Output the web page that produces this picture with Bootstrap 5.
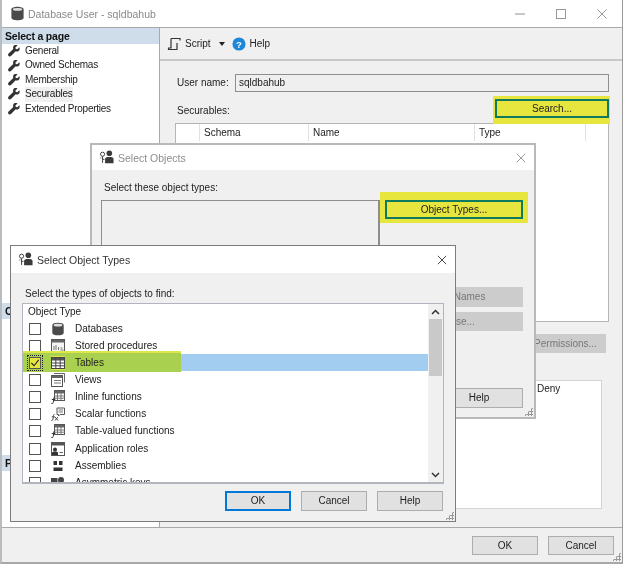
<!DOCTYPE html>
<html lang="en">
<head>
<meta charset="utf-8">
<title>Database User - sqldbahub</title>
<link href="https://cdn.jsdelivr.net/npm/bootstrap@5.3.0/dist/css/bootstrap.min.css" rel="stylesheet">
<style>
html,body{margin:0;padding:0;background:#fff;overflow:hidden}
body{width:624px;height:565px;position:relative;font-family:"Liberation Sans",Arial,sans-serif;font-size:10px;line-height:14px;color:#222;filter:blur(.4px);white-space:nowrap}
.win-main{width:623px;height:564px;border-left:2px solid #b9bcc0;border-right:1px solid #9a9a9a;border-bottom:2px solid #a8a8a8;background:#f0f0f0}
.win-title{height:28px;background:#fff;border-bottom:1px solid #a9a9a9;padding-left:8px;color:#8a8a8a;font-size:10.5px}
.win-title svg{width:15px;height:15px}
.win-title svg.me-2{margin-right:3px!important}
.win-ctl{width:94px;margin-right:14px}
.win-ctl svg{width:12px;height:12px}
.main-body{height:499px}
.side-pane{width:158px;background:#fff;border-right:1px solid #a9a9a9}
.side-head{height:16px;background:#cfdcea;font-weight:700;font-size:10.5px;color:#111;padding-left:3px;line-height:16px;letter-spacing:-.2px}
.side-gap-a{height:187px}
.side-gap-b{height:136px}
.side-item{height:14.4px;padding-left:6px;gap:5px;line-height:14.4px;letter-spacing:-.25px}
.side-item svg{width:12px;height:12px}
.side-item.sel span{background:#f0f0f0}
.tool-strip{height:33px;border-bottom:2px solid #c9c9c9;padding-left:7px;gap:4px}
.tool-strip svg{width:14px;height:14px}
.tool-strip .tool-help{width:14px;height:14px;margin-left:3px}
.caret-a{width:0;height:0;border-left:3.5px solid transparent;border-right:3.5px solid transparent;border-top:4px solid #222;margin-left:4px}
.form-pane{padding:13px 13px 0 15px}
.name-row{height:18px;padding-left:2px}
.name-val{width:374px;height:18px;background:#efefef;border:1px solid #8e8e8e;padding-left:3px;line-height:16px}
.sec-row{height:32px;padding-left:2px}
.sec-lab{padding-top:12px}
.hl-search{background:#e6e63f;padding:3px 1px 6px 2px;height:28px;margin-top:4px;margin-right:-1px}
.btn-win{--bs-btn-padding-y:0;--bs-btn-padding-x:0;--bs-btn-font-size:10px;--bs-btn-line-height:1;--bs-btn-border-radius:0;--bs-btn-bg:#e1e1e1;--bs-btn-border-color:#adadad;--bs-btn-color:#222;height:19px;width:66px;font-family:inherit;white-space:nowrap}
.btn-hl{background:#e6e63f;border:2px solid #0f7a5e;color:#222}
.btn-search{width:114px;display:block}
.grid-box{height:199px;width:434px;background:#fff;border:1px solid #b5b5b5;margin-top:-1px}
.grid-head{height:17px;line-height:17px}
.gh-a{width:24px;border-right:1px solid #e2e2e2}
.gh-b{width:109px;padding-left:4px;border-right:1px solid #e2e2e2}
.gh-c{width:166px;padding-left:4px;border-right:1px solid #e2e2e2}
.gh-d{width:111px;padding-left:4px;border-right:1px solid #e2e2e2}
.perm-wrap{padding-top:12px;padding-right:3px}
.btn-perm{width:122px;background:#ccc;border-color:#ccc;color:#777}
.deny-box{height:129px;width:427px;background:#fff;border:1px solid #d4d4d4;margin-top:27px;padding:1px 0 0 361px}
.win-foot{height:35px;border-top:1px solid #a9a9a9;padding-right:8px;gap:10px;padding-top:8px}
.grip{position:absolute;right:1px;bottom:1px;width:9px;height:9px;background-image:radial-gradient(circle,#999 1px,transparent 1.2px);background-size:3px 3px;clip-path:polygon(100% 0,100% 100%,0 100%)}
.dlg{position:absolute;background:#f0f0f0;border:1px solid #8c8c8c}
.dlg-objs{left:90px;top:143px;width:446px;height:276px;border-color:#b9b9b9;border-width:2px}
.dlg-types{left:10px;top:245px;width:446px;height:277px;border-color:#7c7c7c}
.dlg-title{background:#fff;padding-left:7px;gap:4px;font-size:10.5px}
.dlg-objs .dlg-title{height:25px;color:#8d8d8d}
.dlg-types .dlg-title{height:27px;color:#333}
.dlg-title svg{width:15px;height:15px}
.dlg-title svg.dlg-x{width:10px;height:10px;margin-right:8px}
.dlg-objs .lab-a{padding:11px 0 0 12px;height:29px}
.objs-row{padding-left:9px;height:220px}
.objs-box{width:279px;height:220px;border:1px solid #8e8e8e;border-right-width:2px;background:#f0f0f0;margin-top:1px}
.objs-btns{width:148px;position:relative}
.hl-types{background:#e6e63f;height:31px;margin-top:-7px;padding:8px 0 0 5px}
.btn-types{width:138px}
.btn-off{display:block;width:138px;height:20px;margin-left:5px;background:#ccc;border-color:#ccc;color:#777}
.b1{margin-top:64px}
.b2{margin-top:5px;height:19px}
.b3{margin:57px 0 0 55px;width:88px;background:#e1e1e1;border-color:#adadad;color:#222}
.dlg-types .lab-a{padding:14px 0 0 14px;height:30px}
.list-frame{margin-left:11px;width:422px;height:181px;background:#fff;border:1px solid #b0b5be;border-bottom-width:2px}
.list-main{width:405px;overflow:hidden;height:178px}
.list-cap{height:15px;line-height:15px;padding-left:5px;margin-bottom:1px}
.type-row{height:17.15px;flex:none;position:relative}
.type-row .ck{width:12px;height:12px;border:1px solid #555;background:#fff;margin-left:6px;flex:none;display:flex;align-items:center;justify-content:center}
.type-row svg.ti{width:14px;height:14px;margin:0 10px 0 10px;flex:none}
.type-row.pick{background:#a3cdf0}
.pick-mark{position:absolute;left:-5px;top:-3px;width:163px;height:21px;background:#a9d04f;border-top:2px solid #dfe64a}
.type-row.pick>.ck,.type-row.pick>svg.ti,.type-row.pick>span{position:relative;z-index:1}
.type-row.pick>.ck{background:#e6e63f;outline:1px dotted #222;outline-offset:1px}
.type-row.pick>svg.ti{background:#dfe64a}
.scroll-bar{width:15px;background:#f0f0f0}
.scroll-up,.scroll-dn{height:15px}
.scroll-up svg,.scroll-dn svg{width:9px;height:6px}
.scroll-thumb{height:57px;background:#c9c9c9;margin:0 1px}
.dlg-foot{padding:7px 12px 0 0;gap:10px}
.btn-pri{border:2px solid #0078d7}
.btn-foot{height:20px}
</style>
</head>
<body>
<svg width="0" height="0" class="d-block position-absolute">
<defs>
<symbol id="i-db" viewBox="0 0 16 16"><path fill="#4a4a4a" d="M1.500 3.500C1.500 1.800 4.400.8 8 .8s6.500 1 6.500 2.700v9c0 1.700-2.900 2.700-6.500 2.700s-6.500-1-6.500-2.700z"/><ellipse cx="8" cy="3.600" rx="5" ry="1.500" fill="#ddd"/></symbol>
<symbol id="i-wr" viewBox="0 0 12 12"><path fill="#333" d="M11.500 2.200 9.300 4.300 7.800 3.900 7.400 2.500 9.500.4C7.900-.2 6-.1 5.300 1.400c-.4 1-.3 1.800 0 2.500L.6 8.500c-.7.700-.7 1.800 0 2.500s1.700.8 2.400.1l4.700-4.800c.7.300 1.600.4 2.500 0 1.400-.700 1.800-2.600 1.300-4.100z"/></symbol>
<symbol id="i-ppl" viewBox="0 0 16 16"><circle cx="11" cy="3.500" r="3" fill="#3a3a3a"/><path fill="#3a3a3a" d="M6.500 14V9.500c0-1.500 1.500-2 4.500-2s4.500.5 4.500 2V14z"/><circle cx="3.800" cy="4.500" r="2.200" fill="#fff" stroke="#3a3a3a"/><path fill="none" stroke="#3a3a3a" d="M3.800 6.800v7M3.800 10h2M1.500 8.500h1"/></symbol>
<symbol id="i-sp" viewBox="0 0 14 14"><rect x=".5" y=".5" width="13" height="13" fill="#f4f4f4" stroke="#555"/><path d="M1 1h12v2.500H1z" fill="#666"/><path d="M3 11V7M5 11V6M7.500 11V8M9.500 11h3M9.500 9h2" stroke="#777" fill="none"/></symbol>
<symbol id="i-tb" viewBox="0 0 14 14"><rect x=".5" y="1.500" width="13" height="11" fill="#fff" stroke="#444"/><path d="M1 2h12v2.500H1z" fill="#555"/><path d="M.5 7h13M.5 9.800h13M4.800 2v10M9.200 2v10" stroke="#444" fill="none"/></symbol>
<symbol id="i-vw" viewBox="0 0 14 14"><path d="M3 .5h10.500v9" fill="none" stroke="#666"/><rect x=".5" y="2.500" width="11" height="11" fill="#fff" stroke="#555"/><path d="M1 3h10v2H1z" fill="#666"/><path d="M3 7.500h7M3 10h7" stroke="#777"/></symbol>
<symbol id="i-fn" viewBox="0 0 14 14"><rect x="3.500" y=".5" width="10" height="10" fill="#fff" stroke="#555"/><path d="M4 1h9v2.500H4z" fill="#666"/><path d="M6.500 3v7M10 3v7M3.500 6h10M3.500 8.200h10" stroke="#777"/><path d="M4 7C2.500 7 2.800 8.500 2.500 11S1.500 14 .3 13.600M.8 9.500h3.500" fill="none" stroke="#333"/></symbol>
<symbol id="i-sc" viewBox="0 0 14 14"><path d="M6 1h7.500v6.500H9L7.500 9V7.500H6z" fill="#fff" stroke="#555"/><path d="M7.500 3h4.500M7.500 5h4.500" stroke="#777"/><path d="M3.500 7.500C2 7.500 2.500 9 2.200 11S1 14 .2 13.500M.8 9.800h3M4 10l3 3.500M7 10l-3 3.500" fill="none" stroke="#444"/></symbol>
<symbol id="i-ar" viewBox="0 0 14 14"><rect x=".5" y=".5" width="13" height="13" fill="#fff" stroke="#555"/><path d="M1 1h12v2.500H1z" fill="#555"/><circle cx="4" cy="7.500" r="2" fill="#333"/><path d="M1 13v-2c0-1 1-1.500 3-1.500s3 .5 3 1.500v2z" fill="#333"/><path d="M8.500 10.500H12" stroke="#666"/></symbol>
<symbol id="i-as" viewBox="0 0 14 14"><path d="M2.500 2h3.500v4H2.500zM8 2h3.500v4H8zM2.500 8.500h9V12h-9z" fill="#333"/></symbol>
<symbol id="i-ky" viewBox="0 0 14 14"><path d="M0 2h6.500v5H0z" fill="#444"/><circle cx="10" cy="4" r="3" fill="#444"/></symbol>
</defs>
</svg>

<div class="win-main d-flex flex-column">
  <div class="win-title d-flex align-items-center flex-none">
    <svg class="me-2"><use href="#i-db"/></svg>
    <span class="flex-grow-1">Database User - sqldbahub</span>
    <div class="win-ctl d-flex align-items-center justify-content-between">
      <svg viewBox="0 0 12 12"><path d="M1 6h10" stroke="#aaa" stroke-width="1.300"/></svg>
      <svg viewBox="0 0 12 12"><rect x="1.500" y="1.500" width="9" height="9" fill="none" stroke="#999"/></svg>
      <svg viewBox="0 0 12 12"><path d="M1.500 1.500l9 9M10.500 1.500l-9 9" stroke="#999" fill="none"/></svg>
    </div>
  </div>
  <div class="main-body d-flex">
    <div class="side-pane flex-none">
      <div class="side-head">Select a page</div>
      <div class="side-list">
        <div class="side-item d-flex align-items-center"><svg><use href="#i-wr"/></svg><span>General</span></div>
        <div class="side-item d-flex align-items-center"><svg><use href="#i-wr"/></svg><span>Owned Schemas</span></div>
        <div class="side-item d-flex align-items-center"><svg><use href="#i-wr"/></svg><span>Membership</span></div>
        <div class="side-item sel d-flex align-items-center"><svg><use href="#i-wr"/></svg><span>Securables</span></div>
        <div class="side-item d-flex align-items-center"><svg><use href="#i-wr"/></svg><span>Extended Properties</span></div>
      </div>
      <div class="side-gap-a"></div>
      <div class="side-head">C</div>
      <div class="side-gap-b"></div>
      <div class="side-head">P</div>
    </div>
    <div class="flex-grow-1">
      <div class="tool-strip d-flex align-items-center">
        <svg viewBox="0 0 14 14"><path d="M4 1.500h9v2M4 1.500v9.500H1.500v1.500h8.500V6" fill="none" stroke="#333" stroke-width="1.200"/></svg>
        <span>Script</span><span class="caret-a"></span>
        <svg class="tool-help" viewBox="0 0 16 16"><circle cx="8" cy="8" r="7.500" fill="#1e88d8"/><text x="8" y="12" text-anchor="middle" font-size="11" font-weight="700" font-family="Liberation Sans" fill="#fff">?</text></svg>
        <span>Help</span>
      </div>
      <div class="form-pane">
        <div class="name-row d-flex align-items-center justify-content-between"><span>User name:</span><div class="name-val">sqldbahub</div></div>
        <div class="sec-row d-flex justify-content-between align-items-start">
          <span class="sec-lab">Securables:</span>
          <div class="hl-search"><button type="button" class="btn btn-win btn-hl btn-search">Search...</button></div>
        </div>
        <div class="grid-box">
          <div class="grid-head d-flex"><div class="gh-a"></div><div class="gh-b">Schema</div><div class="gh-c">Name</div><div class="gh-d">Type</div></div>
        </div>
        <div class="perm-wrap d-flex justify-content-end"><button type="button" class="btn btn-win btn-perm">Effective Permissions...</button></div>
        <div class="deny-box">Deny</div>
      </div>
    </div>
  </div>
  <div class="win-foot d-flex justify-content-end position-relative">
    <button type="button" class="btn btn-win">OK</button>
    <button type="button" class="btn btn-win">Cancel</button>
    <span class="grip"></span>
  </div>
</div>

<div class="dlg dlg-objs">
  <div class="dlg-title d-flex align-items-center">
    <svg><use href="#i-ppl"/></svg><span class="flex-grow-1">Select Objects</span>
    <svg class="dlg-x" viewBox="0 0 12 12"><path d="M1 1l10 10M11 1L1 11" stroke="#888" fill="none"/></svg>
  </div>
  <div class="lab-a">Select these object types:</div>
  <div class="objs-row d-flex">
    <div class="objs-box"></div>
    <div class="objs-btns">
      <div class="hl-types"><button type="button" class="btn btn-win btn-hl btn-types">Object Types...</button></div>
      <button type="button" class="btn btn-win btn-off b1">Check Names</button>
      <button type="button" class="btn btn-win btn-off b2">Browse...</button>
      <button type="button" class="btn btn-win btn-off b3">Help</button>
    </div>
  </div>
  <span class="grip"></span>
</div>

<div class="dlg dlg-types">
  <div class="dlg-title d-flex align-items-center">
    <svg><use href="#i-ppl"/></svg><span class="flex-grow-1">Select Object Types</span>
    <svg class="dlg-x" viewBox="0 0 12 12"><path d="M1 1l10 10M11 1L1 11" stroke="#222" fill="none"/></svg>
  </div>
  <div class="lab-a">Select the types of objects to find:</div>
  <div class="list-frame d-flex">
    <div class="list-main">
      <div class="list-cap">Object Type</div>
      <div class="type-row d-flex align-items-center"><span class="ck"></span><svg class="ti"><use href="#i-db"/></svg><span>Databases</span></div>
      <div class="type-row d-flex align-items-center"><span class="ck"></span><svg class="ti"><use href="#i-sp"/></svg><span>Stored procedures</span></div>
      <div class="type-row pick d-flex align-items-center"><i class="pick-mark"></i><span class="ck"><svg width="10" height="10" viewBox="0 0 11 11"><path d="M1.500 5.500l3 3 5-6.500" fill="none" stroke="#222" stroke-width="1.200"/></svg></span><svg class="ti"><use href="#i-tb"/></svg><span>Tables</span></div>
      <div class="type-row d-flex align-items-center"><span class="ck"></span><svg class="ti"><use href="#i-vw"/></svg><span>Views</span></div>
      <div class="type-row d-flex align-items-center"><span class="ck"></span><svg class="ti"><use href="#i-fn"/></svg><span>Inline functions</span></div>
      <div class="type-row d-flex align-items-center"><span class="ck"></span><svg class="ti"><use href="#i-sc"/></svg><span>Scalar functions</span></div>
      <div class="type-row d-flex align-items-center"><span class="ck"></span><svg class="ti"><use href="#i-fn"/></svg><span>Table-valued functions</span></div>
      <div class="type-row d-flex align-items-center"><span class="ck"></span><svg class="ti"><use href="#i-ar"/></svg><span>Application roles</span></div>
      <div class="type-row d-flex align-items-center"><span class="ck"></span><svg class="ti"><use href="#i-as"/></svg><span>Assemblies</span></div>
      <div class="type-row d-flex align-items-center"><span class="ck"></span><svg class="ti"><use href="#i-ky"/></svg><span>Asymmetric keys</span></div>
    </div>
    <div class="scroll-bar d-flex flex-column">
      <div class="scroll-up d-flex align-items-center justify-content-center"><svg viewBox="0 0 9 6"><path d="M1 5l3.500-3.500L8 5" fill="none" stroke="#333" stroke-width="1.500"/></svg></div>
      <div class="scroll-thumb"></div>
      <div class="flex-grow-1"></div>
      <div class="scroll-dn d-flex align-items-center justify-content-center"><svg viewBox="0 0 9 6"><path d="M1 1l3.500 3.500L8 1" fill="none" stroke="#333" stroke-width="1.500"/></svg></div>
    </div>
  </div>
  <div class="dlg-foot d-flex justify-content-end">
    <button type="button" class="btn btn-win btn-foot btn-pri">OK</button>
    <button type="button" class="btn btn-win btn-foot">Cancel</button>
    <button type="button" class="btn btn-win btn-foot">Help</button>
  </div>
  <span class="grip"></span>
</div>
</body>
</html>
